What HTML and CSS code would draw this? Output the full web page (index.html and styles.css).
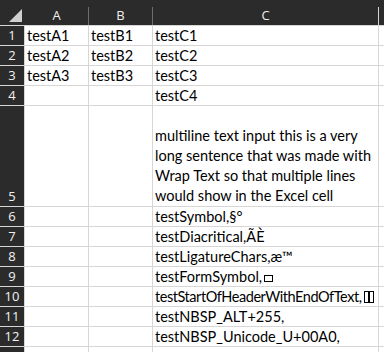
FILE: index.html
```html
<!DOCTYPE html>
<html lang="en">
<head>
  <meta charset="UTF-8">
  <title>Sheet1</title>
  <link rel="stylesheet" href="styles.css">
</head>
<body>
  <div class="sheet">
    <div class="col-head">
      <div class="corner">
        <svg width="14" height="14" viewBox="0 0 14 14"><polygon points="0,13 13,13 13,0" fill="#cfcfcf"/></svg>
      </div>
      <div class="col-label">A</div>
      <div class="col-label">B</div>
      <div class="col-label last">C</div>
      <div class="col-label none"></div>
    </div>

    <div class="grid">
      <div class="rn">1</div><div class="cell">testA1</div><div class="cell">testB1</div><div class="cell">testC1</div><div class="cell"></div>
      <div class="rn">2</div><div class="cell">testA2</div><div class="cell">testB2</div><div class="cell">testC2</div><div class="cell"></div>
      <div class="rn">3</div><div class="cell">testA3</div><div class="cell">testB3</div><div class="cell">testC3</div><div class="cell"></div>
      <div class="rn">4</div><div class="cell"></div><div class="cell"></div><div class="cell">testC4</div><div class="cell"></div>
      <div class="rn">5</div><div class="cell"></div><div class="cell"></div>
      <div class="cell wrap">multiline text input this is a very<br>long sentence that was made with<br>Wrap Text so that multiple lines<br>would show in the Excel cell</div><div class="cell"></div>
      <div class="rn">6</div><div class="cell"></div><div class="cell"></div><div class="cell">testSymbol,§°</div><div class="cell"></div>
      <div class="rn">7</div><div class="cell"></div><div class="cell"></div><div class="cell">testDiacritical,ÃÈ</div><div class="cell"></div>
      <div class="rn">8</div><div class="cell"></div><div class="cell"></div><div class="cell">testLigatureChars,æ™</div><div class="cell"></div>
      <div class="rn">9</div><div class="cell"></div><div class="cell"></div><div class="cell">testFormSymbol,<span class="tofu-small"></span></div><div class="cell"></div>
      <div class="rn">10</div><div class="cell"></div><div class="cell"></div><div class="cell tight">testStartOfHeaderWithEndOfText,<span class="tofu"></span><span class="tofu"></span></div><div class="cell"></div>
      <div class="rn">11</div><div class="cell"></div><div class="cell"></div><div class="cell">testNBSP_ALT+255,&nbsp;</div><div class="cell"></div>
      <div class="rn">12</div><div class="cell"></div><div class="cell"></div><div class="cell">testNBSP_Unicode_U+00A0,&nbsp;</div><div class="cell"></div>
      <div class="rn"></div><div class="cell"></div><div class="cell"></div><div class="cell"></div><div class="cell"></div>
    </div>
  </div>
</body>
</html>
```

FILE: styles.css
```css
* {
  margin: 0;
  padding: 0;
  box-sizing: border-box;
}

body {
  background: #ffffff;
  width: 384px;
  height: 352px;
  overflow: hidden;
}

.sheet {
  width: 384px;
}

.col-head {
  display: grid;
  grid-template-columns: 25px 64px 64px 226px 1fr;
  height: 25px;
  background-color: #2b2b2b;
  font-family: 'Open Sans', sans-serif;
  font-size: 13px;
  color: #eeeeee;
}

.corner {
  display: flex;
  justify-content: flex-end;
  align-items: flex-end;
  padding: 0 2px 2px 0;
}

.col-label {
  display: flex;
  justify-content: center;
  align-items: center;
  padding: 5px 1px 0 0;
  background: linear-gradient(#6e6e6e, #6e6e6e) right bottom / 1px 18px no-repeat;
}

.col-label.last {
  background: linear-gradient(#d4d4d4, #d4d4d4) right bottom / 1px 18px no-repeat;
}

.col-label.none {
  background: none;
}

.grid {
  display: grid;
  grid-template-columns: 24px 63px 63px 225px 1fr;
  grid-template-rows: repeat(4, 19px) 100px repeat(8, 19px);
  gap: 1px;
  padding-top: 1px;
  background-color: #d6d6d6;
  font-family: 'Lato', sans-serif;
  font-size: 14.5px;
  color: #000000;
}

.rn {
  display: flex;
  justify-content: center;
  align-items: flex-end;
  background-color: #2b2b2b;
  color: #f2f2f2;
  font-family: 'Open Sans', sans-serif;
  font-size: 13px;
  line-height: 19px;
}

.cell {
  display: flex;
  align-items: flex-end;
  background-color: #ffffff;
  padding-left: 2px;
  line-height: 19px;
  white-space: nowrap;
  overflow: hidden;
}

.cell.wrap {
  display: block;
  padding-top: 20px;
  line-height: 20px;
}

.cell.tight {
  letter-spacing: -0.45px;
}

.tofu-small {
  display: inline-block;
  width: 9px;
  height: 7px;
  border: 1.5px solid #000;
  margin: 0 0 4px 2px;
}

.tofu {
  display: inline-block;
  flex-shrink: 0;
  width: 5px;
  height: 12px;
  border: 1px solid #000;
  margin-bottom: 3px;
}

.tofu:first-of-type {
  margin-left: 2px;
}
```
